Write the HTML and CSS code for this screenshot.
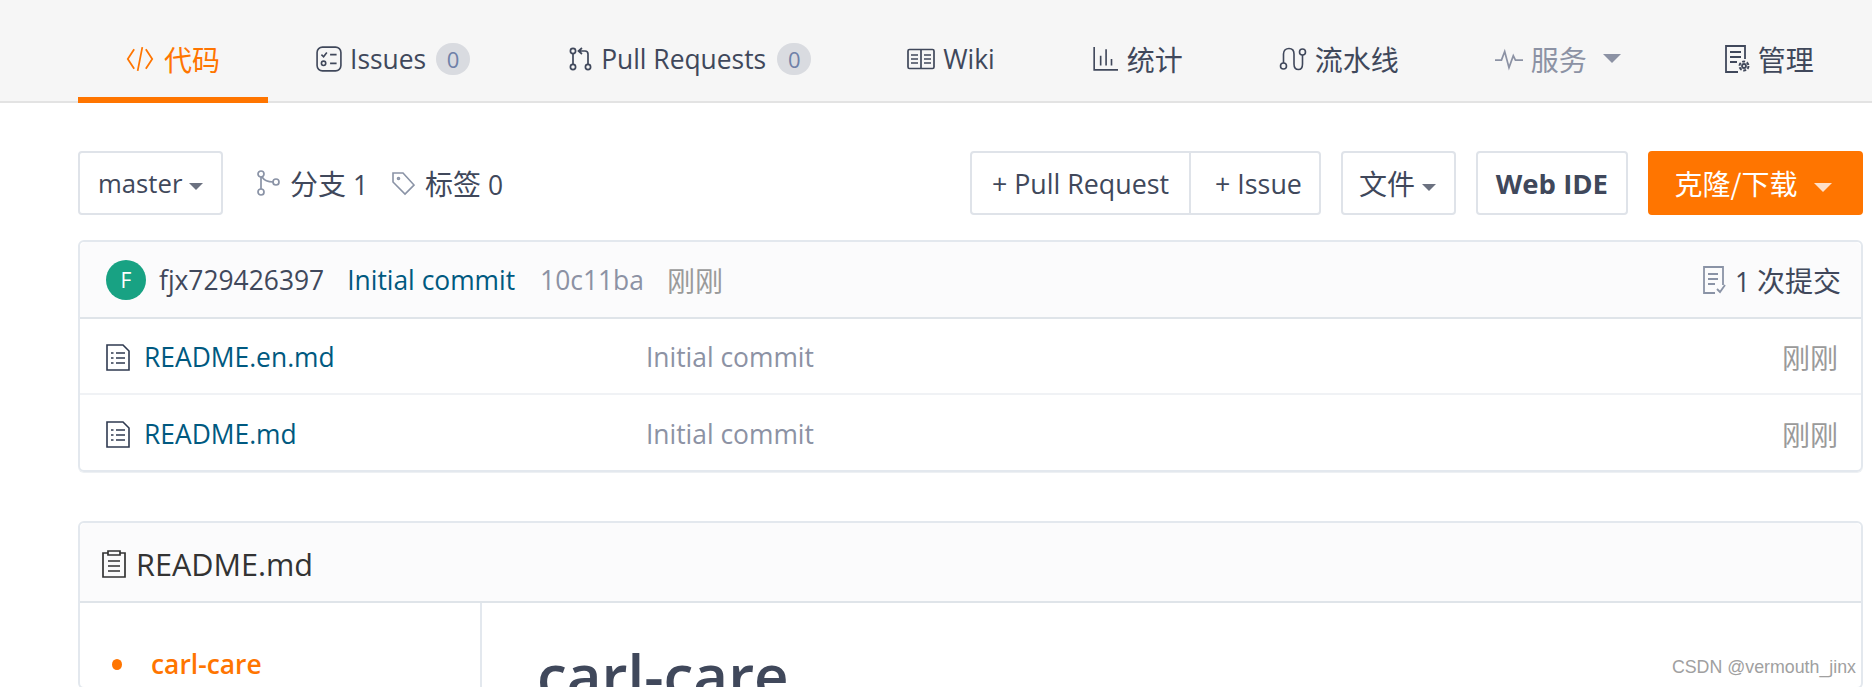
FILE: index.html

```html
<!DOCTYPE html>
<html>
<head>
    <meta charset="utf-8">
    <link rel="stylesheet" href="styles.css">
</head>
<body>
    <nav class="tabs">
        <div class="tabs-inner">
            <a class="tab active">
                <svg class="icon" viewBox="0 0 24 24" fill="none" stroke="currentColor" stroke-width="1.5" preserveAspectRatio="none"><path d="M7 3L1.5 12L7 21M17 3L22.5 12L17 21M14 1L10 23"/></svg>
                <span class="zh">代码</span>
            </a>
            <a class="tab tab-issues">
                <svg class="icon" viewBox="0 0 24 24" fill="none" stroke="currentColor" stroke-width="1.5"><rect x="1" y="1" width="22" height="22" rx="5"/><path d="M5 8L7 10L10 6M13 8H19M13 16H19"/><circle cx="7" cy="16" r="2"/></svg>
                Issues <span class="badge">0</span>
            </a>
            <a class="tab">
                <svg class="icon icon-pr" viewBox="0 0 24 24" fill="none" stroke="currentColor" stroke-width="1.7"><circle cx="4" cy="4" r="2.6"/><circle cx="4" cy="20" r="2.6"/><circle cx="19" cy="20" r="2.6"/><path d="M4 7V17M19 17V7C19 5 18 4 16 4H10M13 1L9.5 4L13 7"/></svg>
                Pull Requests <span class="badge">0</span>
            </a>
            <a class="tab">
                <svg class="icon icon-wide" viewBox="0 0 28 24" fill="none" stroke="currentColor" stroke-width="1.7"><rect x="1" y="2.5" width="26" height="19" rx="1.5"/><path d="M14 3V21M4 8H11M4 12H11M4 16H11M17 8H24M17 12H24M17 16H24"/></svg>
                Wiki
            </a>
            <a class="tab">
                <svg class="icon" viewBox="0 0 24 24" fill="none" stroke="currentColor" stroke-width="1.5"><path d="M2 1V22H24M8 18V9M13 18V3M18 18V12"/></svg>
                <span class="zh">统计</span>
            </a>
            <a class="tab">
                <svg class="icon icon-wide" viewBox="0 0 28 24" fill="none" stroke="currentColor" stroke-width="1.6"><circle cx="4.5" cy="19" r="3"/><circle cx="23.5" cy="5" r="3"/><path d="M4.5 16V7C4.5 3.5 7 1.5 10 1.5S15 3.5 15 7V17C15 20.5 17 22.5 19.5 22.5S23.5 20.5 23.5 17V8"/></svg>
                <span class="zh">流水线</span>
            </a>
            <a class="tab muted">
                <svg class="icon" viewBox="0 0 26 24" fill="none" stroke="currentColor" stroke-width="1.6"><path d="M0 13H6L9 5L13 20L17 9L19 13H26"/></svg>
                <span class="zh">服务</span> <span class="caret caret-lg"></span>
            </a>
            <a class="tab">
                <svg class="icon icon-tall" viewBox="0 0 26 28" fill="none" stroke="currentColor" stroke-width="1.8"><path d="M14 27H2V1H21V14M6 7H17M6 12H17M6 17H13"/><circle cx="20" cy="21" r="2"/><circle cx="20" cy="21" r="4.5" stroke-width="2" stroke-dasharray="3 1.7"/></svg>
                <span class="zh">管理</span>
            </a>
        </div>
    </nav>

    <main class="page">
        <div class="toolbar">
            <div class="toolbar-left">
                <button class="btn btn-branch">master <span class="caret"></span></button>
                <span class="meta">
                    <svg class="icon-sm" viewBox="0 0 24 26" fill="none" stroke="#8a93a6" stroke-width="1.7"><circle cx="5" cy="4" r="3"/><circle cx="5" cy="22" r="3"/><circle cx="20" cy="12" r="3"/><path d="M5 7V19M6 7C8 10 12 12 17 12"/></svg>
                    <span><span class="zh">分支</span> 1</span>
                </span>
                <span class="meta">
                    <svg class="icon-sm" viewBox="0 0 24 26" fill="none" stroke="#8a93a6" stroke-width="1.6"><path d="M2 3H12L23 15L14 24L2 12Z"/><circle cx="7.5" cy="8.5" r="1"/></svg>
                    <span><span class="zh">标签</span> 0</span>
                </span>
            </div>
            <div class="toolbar-right">
                <div class="btn-group">
                    <button class="btn">+ Pull Request</button>
                    <button class="btn">+ Issue</button>
                </div>
                <button class="btn btn-file"><span class="zh">文件</span> <span class="caret"></span></button>
                <button class="btn btn-ide">Web IDE</button>
                <button class="btn btn-clone"><span class="zh">克隆/下载</span> <span class="caret caret-lg"></span></button>
            </div>
        </div>

        <section class="files">
            <div class="commit-head">
                <span class="avatar">F</span>
                <span class="author">fjx729426397</span>
                <a class="commit-msg">Initial commit</a>
                <span class="sha">10c11ba</span>
                <span class="time zh">刚刚</span>
                <span class="commit-count">
                    <svg class="icon-count" viewBox="0 0 24 30" fill="none" stroke="#8a93a6" stroke-width="1.8"><path d="M13 28H2V2H21V20M6 9H16M6 14H16M6 19H13M15 24L18 27L23 20"/></svg>
                    <span>1 <span class="zh">次提交</span></span>
                </span>
            </div>
            <div class="file-row">
                <a class="file-name">
                    <svg class="icon-file" viewBox="0 0 24 28" fill="none" stroke="#2f3a50" stroke-width="1.6"><path d="M1 2H17L23 8V27H1ZM5 10H7.5M10 10H19M5 15H7.5M10 15H19M5 20H7.5M10 20H19"/></svg>
                    README.en.md
                </a>
                <span class="file-commit">Initial commit</span>
                <span class="time zh">刚刚</span>
            </div>
            <div class="file-row">
                <a class="file-name">
                    <svg class="icon-file" viewBox="0 0 24 28" fill="none" stroke="#2f3a50" stroke-width="1.6"><path d="M1 2H17L23 8V27H1ZM5 10H7.5M10 10H19M5 15H7.5M10 15H19M5 20H7.5M10 20H19"/></svg>
                    README.md
                </a>
                <span class="file-commit">Initial commit</span>
                <span class="time zh">刚刚</span>
            </div>
        </section>

        <section class="readme">
            <div class="readme-head">
                <svg class="icon-readme" viewBox="0 0 24 28" fill="none" stroke="#333" stroke-width="1.7"><path d="M6 3H1V27H23V3H18M6 1H18V5H6ZM6 11H18M6 16H18M6 21H18"/></svg>
                README.md
            </div>
            <div class="readme-body">
                <ul class="toc">
                    <li>carl-care</li>
                </ul>
                <div class="content">
                    <h1>carl-care</h1>
                </div>
            </div>
        </section>
    </main>

    <div class="watermark">CSDN @vermouth_jinx</div>
</body>
</html>
```

FILE: styles.css

```css
body {
    margin: 0;
    height: 687px;
    overflow: hidden;
    background: #fff;
    color: #40485b;
    font-family: "Open Sans", "Noto Sans CJK SC", sans-serif;
    font-size: 26.4px;
}
svg {
    flex: none;
}
.zh {
    font-family: "Noto Sans CJK SC", sans-serif;
    font-size: 28px;
}
.tabs {
    height: 101px;
    background: #f6f6f6;
    border-bottom: 2px solid #e3e3e3;
}
.tabs-inner {
    display: flex;
    height: 103px;
    margin-left: 78px;
}
.tab {
    display: flex;
    align-items: center;
    gap: 8px;
    padding: 14px 48px 0;
    box-sizing: border-box;
    height: 103px;
    white-space: nowrap;
}
.tab.active {
    gap: 10px;
    color: #ff7500;
    border-bottom: 6px solid #ff7500;
    padding-top: 20px;
}
.tab.muted {
    padding-right: 55px;
    color: #8c92a4;
}
.tab-issues {
    gap: 7px;
    padding-left: 47px;
    padding-right: 51px;
}
.icon {
    width: 28px;
    height: 26px;
}
.icon-pr {
    width: 24px;
    height: 24px;
}
.icon-wide {
    width: 28px;
    height: 24px;
}
.icon-tall {
    width: 26px;
    height: 28px;
}
.badge {
    display: inline-block;
    width: 34px;
    height: 32px;
    margin-left: 3px;
    line-height: 32px;
    border-radius: 16px;
    background: #d9dbe0;
    color: #6f81a8;
    font-size: 22px;
    text-align: center;
}
.caret {
    display: inline-block;
    width: 0;
    height: 0;
    vertical-align: middle;
    border-left: 7px solid transparent;
    border-right: 7px solid transparent;
    border-top: 7px solid #6b7180;
}
.caret-lg {
    margin-left: 8px;
    border-left-width: 9px;
    border-right-width: 9px;
    border-top-width: 9px;
    border-top-color: #8c92a4;
}
.page {
    margin: 0 9px 0 78px;
}
.toolbar {
    display: flex;
    justify-content: space-between;
    margin-top: 48px;
    height: 64px;
}
.toolbar-left, .toolbar-right {
    display: flex;
    align-items: center;
}
.toolbar-right {
    gap: 20px;
}
.btn {
    height: 64px;
    box-sizing: border-box;
    padding: 0 21px;
    background: #fff;
    border: 2px solid #dfe3e9;
    border-radius: 4px;
    color: #40485b;
    font: inherit;
    white-space: nowrap;
}
.btn-group {
    display: flex;
}
.btn-group .btn {
    font-size: 26.8px;
}
.btn-group .btn:first-child {
    padding: 1px 20px 0;
    border-radius: 4px 0 0 4px;
}
.btn-group .btn:last-child {
    padding: 1px 17px 0 24px;
    border-left: 0;
    border-radius: 0 4px 4px 0;
}
.btn-branch {
    padding: 1px 18px 0;
    font-size: 25.7px;
}
.btn-file {
    padding: 0 18px 0 16px;
}
.btn-ide {
    padding: 0 18px;
    font-size: 27.5px;
    font-weight: 700;
}
.btn-clone {
    width: 215px;
    padding: 0 4px 0 0;
    background: #ff7500;
    border-color: #ff7500;
    color: #fff;
}
.btn-clone .caret {
    margin-left: 10px;
    border-top-color: #ffe0c8;
}
.meta {
    display: flex;
    align-items: center;
    gap: 10px;
    margin-left: 33px;
    white-space: nowrap;
}
.meta + .meta {
    margin-left: 23px;
}
.icon-sm {
    width: 24px;
    height: 26px;
}
.files {
    margin-top: 25px;
    border: 2px solid #e3e8ee;
    border-radius: 6px;
    box-shadow: 0 1px 0 #edf0f3;
}
.commit-head {
    display: flex;
    align-items: center;
    height: 75px;
    padding: 0 20px 0 26px;
    background: #fbfbfc;
    border-bottom: 2px solid #dfe4e9;
    border-radius: 6px 6px 0 0;
}
.avatar {
    width: 40px;
    height: 40px;
    line-height: 40px;
    border-radius: 50%;
    background: #18a283;
    color: #fff;
    font-size: 21px;
    text-align: center;
}
.author {
    margin-left: 13px;
}
.commit-msg {
    margin-left: 23px;
    color: #005980;
}
.sha {
    margin-left: 25px;
    color: #8c92a4;
}
.time {
    margin-left: 23px;
    color: #9a9a9a;
}
.commit-count {
    display: flex;
    align-items: center;
    gap: 9px;
    margin-left: auto;
}
.icon-count {
    width: 24px;
    height: 30px;
}
.file-row {
    display: flex;
    align-items: center;
    box-sizing: border-box;
    height: 76px;
    padding: 2px 23px 0 26px;
    border-bottom: 2px solid #f0f2f5;
}
.file-row:last-child {
    height: 75px;
    border-bottom: 0;
}
.file-name {
    display: flex;
    align-items: center;
    gap: 14px;
    width: 540px;
    color: #005980;
}
.icon-file {
    width: 24px;
    height: 28px;
}
.file-commit {
    color: #8c92a4;
}
.file-row .time {
    margin-left: auto;
}
.readme {
    margin-top: 49px;
    border: 2px solid #e3e8ee;
    border-radius: 6px;
}
.readme-head {
    display: flex;
    align-items: center;
    gap: 10px;
    box-sizing: border-box;
    height: 80px;
    padding: 3px 22px 0;
    background: #fbfbfc;
    border-bottom: 2px solid #dfe4e9;
    border-radius: 6px 6px 0 0;
    color: #333;
    font-size: 30.6px;
}
.icon-readme {
    width: 24px;
    height: 28px;
}
.readme-body {
    display: flex;
    height: 84px;
    overflow: hidden;
}
.toc {
    width: 402px;
    margin: 0;
    padding: 43px 0 0 32px;
    box-sizing: border-box;
    border-right: 2px solid #e3e8ee;
    color: #ff7500;
    font-weight: 600;
    list-style: none;
}
.toc li {
    display: flex;
    align-items: center;
    gap: 29px;
}
.toc li::before {
    content: "";
    width: 10px;
    height: 11px;
    border-radius: 50%;
    background: #ff7500;
}
.content {
    padding-left: 55px;
}
.content h1 {
    margin: 31px 0 0;
    color: #40485b;
    font-size: 60px;
    font-weight: 600;
}
.watermark {
    position: absolute;
    right: 16px;
    top: 657px;
    color: #a0a0a0;
    font-family: "Liberation Sans", sans-serif;
    font-size: 17.8px;
}
```
